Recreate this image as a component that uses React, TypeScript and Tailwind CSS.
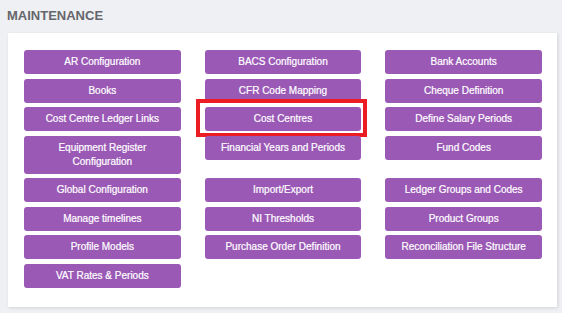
const ITEMS: string[][] = [
  ["AR Configuration", "BACS Configuration", "Bank Accounts"],
  ["Books", "CFR Code Mapping", "Cheque Definition"],
  ["Cost Centre Ledger Links", "Cost Centres", "Define Salary Periods"],
  ["Equipment Register Configuration", "Financial Years and Periods", "Fund Codes"],
  ["Global Configuration", "Import/Export", "Ledger Groups and Codes"],
  ["Manage timelines", "NI Thresholds", "Product Groups"],
  ["Profile Models", "Purchase Order Definition", "Reconciliation File Structure"],
  ["VAT Rates & Periods"],
]

const HIGHLIGHTED = "Cost Centres"

export default function App() {
  return (
    <div className="min-h-[313px] bg-[#eff0f4] pl-[8px] pr-[5px] pt-[8px] pb-[6px] font-['Liberation_Sans',Arial,sans-serif]">
      {/* heading */}
      <h1 className="text-[13px] leading-[16px] font-bold text-[#65666b] -ml-[1px]">MAINTENANCE</h1>

      {/* card */}
      <div className="mt-[9px] bg-white shadow-[1px_1px_3px_rgba(0,0,0,0.12)] pl-[16px] pr-[15px] pt-[17px] pb-[19px]">
        <div className="grid grid-cols-3 gap-x-[24px] gap-y-[4.5px] items-start">
          {ITEMS.flat().map(label => (
            <div key={label} className="relative">
              <button className="block w-full rounded-[3px] bg-[#9b59b6] px-2 py-[5px] text-[10px] leading-[14px] text-white text-center [-webkit-text-stroke:0.2px_white]">
                {label}
              </button>
              {label === HIGHLIGHTED && (
                <div className="absolute -left-[9px] -top-[8px] -right-[6px] -bottom-[6px] border-4 border-[#ec1c24] pointer-events-none" />
              )}
            </div>
          ))}
        </div>
      </div>
    </div>
  )
}
